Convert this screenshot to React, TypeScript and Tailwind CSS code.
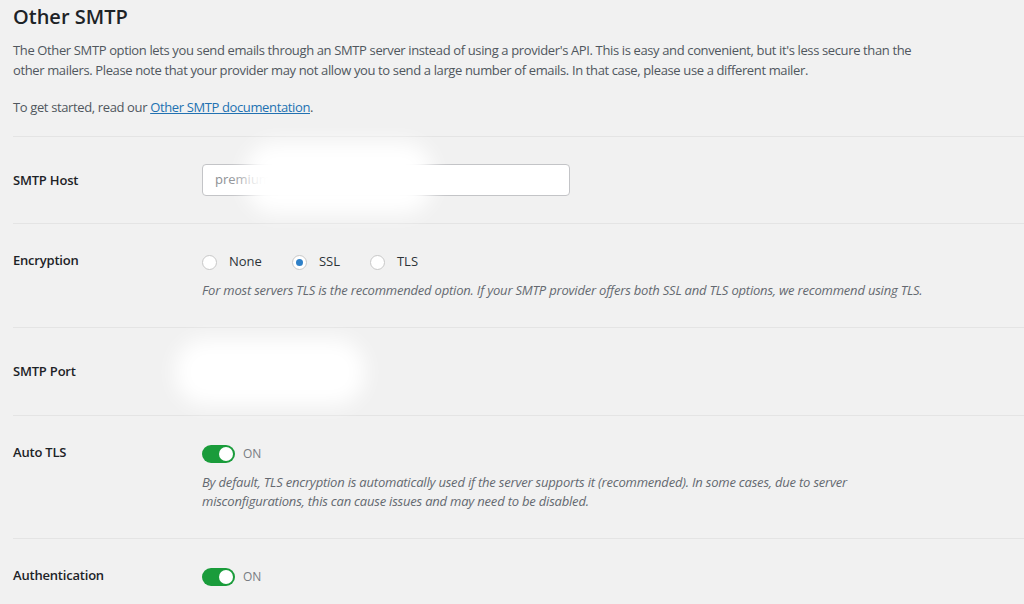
import type { ReactNode } from 'react';

const font = { fontFamily: '"Segoe UI", "Open Sans", "Noto Sans", sans-serif' };

function Row({ label, children, labelTop = 'pt-[36px]' }: { label: string; children: ReactNode; labelTop?: string }) {
  return (
    <div className="flex border-t border-[#e4e4e4]">
      <div className={`w-[189px] shrink-0 text-[13px] font-semibold tracking-[-0.2px] text-[#1d2327] ${labelTop}`}>{label}</div>
      <div className="flex-1">{children}</div>
    </div>
  );
}

function Radio({ label, checked }: { label: string; checked?: boolean }) {
  return (
    <label className="flex items-center gap-[12px]">
      <span className="flex h-[15px] w-[15px] items-center justify-center rounded-full border border-[#c8c8c8] bg-white">
        {checked && <span className="h-[7px] w-[7px] rounded-full bg-[#2f80c8]" />}
      </span>
      <span className="text-[13px] text-[#2c3338]">{label}</span>
    </label>
  );
}

function Toggle() {
  return (
    <div className="flex items-center gap-[8px]">
      <span className="flex h-[18px] w-[33px] items-center justify-end rounded-full bg-[#1a9c3b] px-[2px]">
        <span className="h-[14px] w-[14px] rounded-full bg-white" />
      </span>
      <span className="text-[12px] text-[#787c82]">ON</span>
    </div>
  );
}

function Blur({ className }: { className: string }) {
  return <div className={`pointer-events-none absolute rounded-[30px] bg-white blur-[10px] ${className}`} />;
}

export default function App() {
  return (
    <div className="relative h-[604px] w-[1024px] overflow-hidden bg-[#f1f1f1] pl-[13px]" style={font}>
      <h2 className="pt-[3px] text-[20px] font-semibold leading-[28px] text-[#1d2327]">Other SMTP</h2>
      <p className="mt-[9px] whitespace-nowrap text-[13px] leading-[20px] tracking-[-0.37px] text-[#50575e]">
        The Other SMTP option lets you send emails through an SMTP server instead of using a provider's API. This is easy and
        convenient, but it's less secure than the
        <br />
        other mailers. Please note that your provider may not allow you to send a large number of emails. In that case, please
        use a different mailer.
      </p>
      <p className="mt-[17px] text-[13px] leading-[20px] tracking-[-0.37px] text-[#50575e]">
        To get started, read our{' '}
        <a className="text-[#2271b1] underline" href="#">
          Other SMTP documentation
        </a>
        .
      </p>

      <div className="mt-[19px]">
        <Row label="SMTP Host" labelTop="pt-[34px]">
          <div className="py-[27px]">
            <div className="flex h-[32px] w-[368px] items-center rounded-[4px] border border-[#c3c4c7] bg-white px-[12px] text-[13px] text-[#8c8f94]">
              premium
            </div>
          </div>
        </Row>
        <Row label="Encryption" labelTop="pt-[27px]">
          <div className="pb-[27px] pt-[28px]">
            <div className="flex h-[20px] items-center gap-[30px]">
              <Radio label="None" />
              <Radio label="SSL" checked />
              <Radio label="TLS" />
            </div>
            <p className="mt-[8px] whitespace-nowrap text-[13px] italic leading-[20px] tracking-[-0.2px] text-[#646970]">
              For most servers TLS is the recommended option. If your SMTP provider offers both SSL and TLS options, we recommend using TLS.
            </p>
          </div>
        </Row>
        <Row label="SMTP Port" labelTop="pt-[34px]">
          <div className="h-[87px]" />
        </Row>
        <Row label="Auto TLS" labelTop="pt-[27px]">
          <div className="pb-[27px] pt-[29px]">
            <Toggle />
            <p className="mt-[10px] whitespace-nowrap text-[13px] italic leading-[19px] tracking-[-0.2px] text-[#646970]">
              By default, TLS encryption is automatically used if the server supports it (recommended). In some cases, due to server
              <br />
              misconfigurations, this can cause issues and may need to be disabled.
            </p>
          </div>
        </Row>
        <Row label="Authentication" labelTop="pt-[27px]">
          <div className="pb-[26px] pt-[29px]">
            <Toggle />
          </div>
        </Row>
      </div>

      <Blur className="left-[245px] top-[142px] h-[72px] w-[188px]" />
      <Blur className="left-[175px] top-[339px] h-[66px] w-[190px]" />
    </div>
  );
}
